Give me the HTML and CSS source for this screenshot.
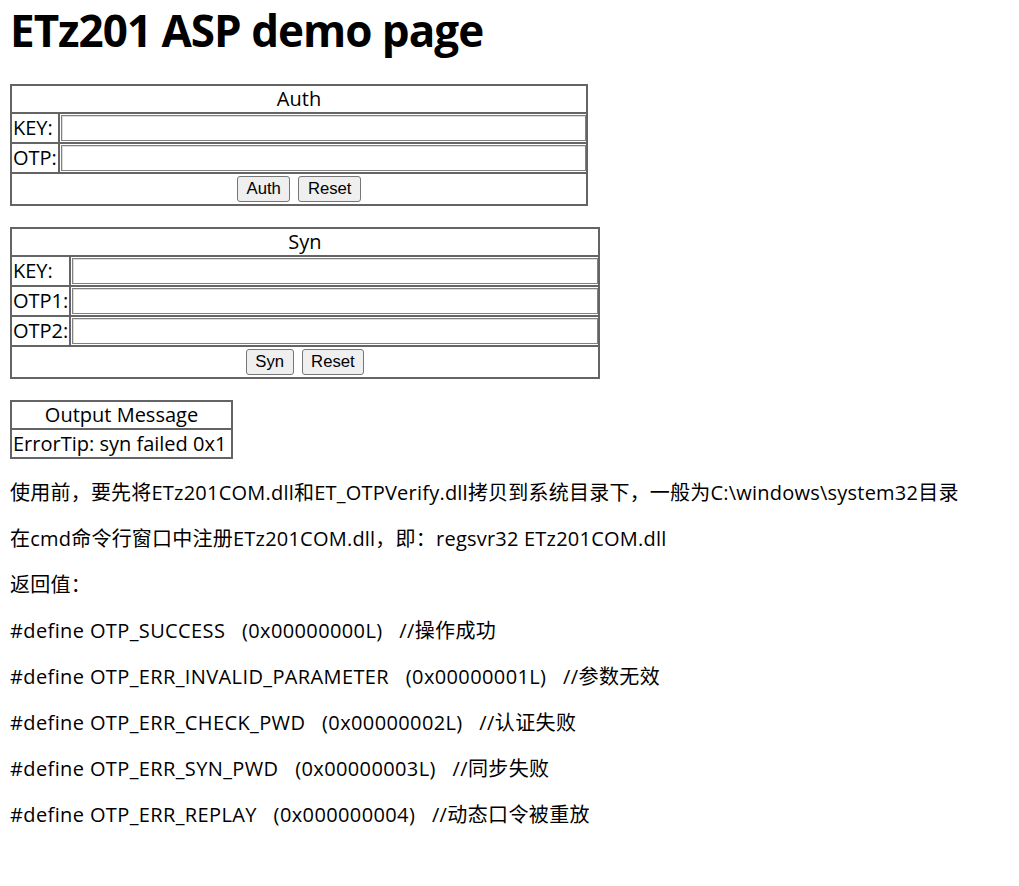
FILE: index.html
```html
<!DOCTYPE html>
<html lang="zh-CN">
<head>
<meta charset="utf-8">
<title>ETz201 ASP demo page</title>
<link rel="stylesheet" href="styles.css">
</head>
<body>
<h1 class="title">ETz201 ASP demo page</h1>

<form class="block">
  <table class="box box-auth">
    <tr><td class="head" colspan="2">Auth</td></tr>
    <tr><td class="label label-auth">KEY:</td><td class="field"><input class="txt" type="text"></td></tr>
    <tr><td class="label label-auth">OTP:</td><td class="field"><input class="txt" type="text"></td></tr>
    <tr><td class="actions" colspan="2"><div class="btns"><button class="btn" type="button">Auth</button><button class="btn" type="button">Reset</button></div></td></tr>
  </table>
</form>

<form class="block">
  <table class="box box-syn">
    <tr><td class="head" colspan="2">Syn</td></tr>
    <tr><td class="label label-syn">KEY:</td><td class="field"><input class="txt" type="text"></td></tr>
    <tr><td class="label label-syn">OTP1:</td><td class="field"><input class="txt" type="text"></td></tr>
    <tr><td class="label label-syn">OTP2:</td><td class="field"><input class="txt" type="text"></td></tr>
    <tr><td class="actions" colspan="2"><div class="btns"><button class="btn" type="button">Syn</button><button class="btn" type="button">Reset</button></div></td></tr>
  </table>
</form>

<div class="block">
  <table class="box box-out">
    <tr><td class="head">Output Message</td></tr>
    <tr><td class="msg">ErrorTip: syn failed 0x1</td></tr>
  </table>
</div>

<p class="line">使用前，要先将ETz201COM.dll和ET_OTPVerify.dll拷贝到系统目录下，一般为C:\windows\system32目录</p>
<p class="line">在cmd命令行窗口中注册ETz201COM.dll，即：regsvr32 ETz201COM.dll</p>
<p class="line">返回值：</p>
<p class="line define">#define OTP_SUCCESS&nbsp;&nbsp;&nbsp;(0x00000000L)&nbsp;&nbsp;&nbsp;//操作成功</p>
<p class="line define">#define OTP_ERR_INVALID_PARAMETER&nbsp;&nbsp;&nbsp;(0x00000001L)&nbsp;&nbsp;&nbsp;//参数无效</p>
<p class="line define">#define OTP_ERR_CHECK_PWD&nbsp;&nbsp;&nbsp;(0x00000002L)&nbsp;&nbsp;&nbsp;//认证失败</p>
<p class="line define">#define OTP_ERR_SYN_PWD&nbsp;&nbsp;&nbsp;(0x00000003L)&nbsp;&nbsp;&nbsp;//同步失败</p>
<p class="line define">#define OTP_ERR_REPLAY&nbsp;&nbsp;&nbsp;(0x000000004)&nbsp;&nbsp;&nbsp;//动态口令被重放</p>
</body>
</html>
```

FILE: styles.css
```css
html {
  background: #ffffff;
}

body {
  margin: 3px 10px 10px 10px;
  font-family: "Open Sans", "Noto Sans CJK SC", sans-serif;
  font-size: 20px;
  line-height: 26px;
  color: #000000;
}

.title {
  margin: 0 0 27px 0;
  font-size: 44px;
  line-height: 54px;
  font-weight: 700;
  letter-spacing: -1px;
}

.block {
  margin: 0 0 21px 0;
}

.box {
  border-collapse: separate;
  border-spacing: 0;
  border: 1px solid #646464;
}

.box td {
  border: 1px solid #646464;
  padding: 0 1px;
  box-sizing: border-box;
}

.box-auth {
  width: 578px;
}

.box-syn {
  width: 590px;
}

.box-out {
  width: 223px;
}

.head {
  text-align: center;
  height: 28px;
}

.label {
  white-space: nowrap;
  text-align: left;
}

.label-auth {
  width: 48px;
}

.label-syn {
  width: 59px;
}

.box td.field {
  padding: 1px 0 1px 1px;
}

.txt {
  display: block;
  width: 100%;
  height: 26px;
  box-sizing: border-box;
  margin: 0;
  border: 1px solid #808080;
  box-shadow: inset 1px 1px 0 #dcdcdc;
  background: #ffffff;
  font: inherit;
}

.actions {
  height: 32px;
}

.btns {
  display: flex;
  justify-content: center;
  gap: 8px;
  padding: 2px 0;
}

.btn {
  height: 26px;
  margin: 0;
  padding: 0 8.5px;
  border: 1px solid #767676;
  border-radius: 3px;
  background: #efefef;
  font-family: "Liberation Sans", Arial, sans-serif;
  font-size: 16.7px;
  color: #000000;
}

.msg {
  height: 29px;
  white-space: nowrap;
}

.line {
  margin: 20px 0;
  white-space: nowrap;
  letter-spacing: 0.22px;
}

.line.define {
  letter-spacing: 0.38px;
}
```
